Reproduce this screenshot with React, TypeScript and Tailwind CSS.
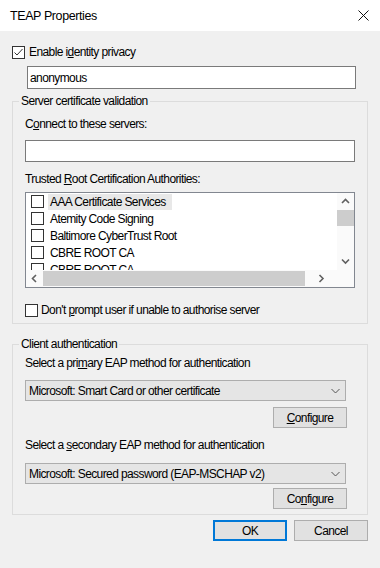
import React from "react";

const Check: React.FC<{ checked?: boolean }> = ({ checked }) => (
  <span className="w-[13px] h-[13px] border border-[#333333] bg-white flex items-center justify-center shrink-0">
    {checked && (
      <svg width="11" height="11" viewBox="0 0 11 11">
        <path d="M1.5 5.5 L4 8 L9.5 2" stroke="#333333" fill="none" strokeWidth="1" />
      </svg>
    )}
  </span>
);

const Chevron: React.FC<{ dir: "up" | "down" | "left" | "right" }> = ({ dir }) => {
  const d = {
    up: "M1 5 L4.5 1.5 L8 5",
    down: "M1 1.5 L4.5 5 L8 1.5",
    left: "M5 1 L1.5 4.5 L5 8",
    right: "M1.5 1 L5 4.5 L1.5 8",
  }[dir];
  const vertical = dir === "up" || dir === "down";
  return (
    <svg width={vertical ? 9 : 7} height={vertical ? 7 : 9} viewBox={vertical ? "0 0 9 7" : "0 0 7 9"}>
      <path d={d} stroke="#606060" strokeWidth="1.6" fill="none" />
    </svg>
  );
};

const Dropdown: React.FC<{ value: string }> = ({ value }) => (
  <div className="h-[21px] w-[321px] border border-[#adadad] bg-[#e5e5e5] flex items-center justify-between pl-[3px] pr-[5px]">
    <span>{value}</span>
    <svg width="9" height="6" viewBox="0 0 9 6">
      <path d="M0.5 1 L4.5 5 L8.5 1" stroke="#555555" strokeWidth="1" fill="none" />
    </svg>
  </div>
);

const Button: React.FC<{ children: React.ReactNode; primary?: boolean; className?: string }> = ({
  children,
  primary,
  className,
}) => (
  <div
    className={
      "h-[21px] w-[74px] bg-[#e1e1e1] flex items-center justify-center " +
      (primary ? "border border-[#0078d7] shadow-[inset_0_0_0_1px_#0078d7] " : "border border-[#adadad] ") +
      (className ?? "")
    }
  >
    {children}
  </div>
);

const certs = [
  "AAA Certificate Services",
  "Atemity Code Signing",
  "Baltimore CyberTrust Root",
  "CBRE ROOT CA",
  "CBRE ROOT CA",
];

export default function App() {
  return (
    <div className="w-[380px] h-[568px] bg-[#f0f0f0] text-[12px] leading-[16px] text-black font-['Liberation_Sans',Arial,sans-serif] tracking-[-0.6px] overflow-hidden">
      {/* title bar */}
      <div className="h-[31px] bg-white flex items-center justify-between pl-[10px] pr-[10px]">
        <span className="text-[12.5px] tracking-[-0.4px]">TEAP Properties</span>
        <svg width="11" height="11" viewBox="0 0 11 11" className="mr-[1px]">
          <path d="M0.5 0.5 L10.5 10.5 M10.5 0.5 L0.5 10.5" stroke="#111111" strokeWidth="1" />
        </svg>
      </div>

      <div className="pl-[12px] pr-[12px]">
        <div className="mt-[13px] flex items-center gap-[4px] h-[16px]">
          <Check checked />
          <span>
            Enable i<u className="underline-offset-1">d</u>entity privacy
          </span>
        </div>
        <div className="mt-[6px] ml-[15px] w-[329px] h-[23px] bg-white border border-[#7a7a7a] flex items-center pl-[2px]">
          anonymous
        </div>

        {/* server certificate validation */}
        <fieldset className="mt-[4px] border border-[#dcdcdc] pl-[12px] pr-[12px] pb-[5px]">
          <legend className="ml-[-6px] px-[2px]">Server certificate validation</legend>
          <div className="mt-[7px]">
            C<u className="underline-offset-1">o</u>nnect to these servers:
          </div>
          <div className="mt-[8px] h-[22px] w-[330px] bg-white border border-[#7a7a7a]" />
          <div className="mt-[9px]">
            Trusted <u className="underline-offset-1">R</u>oot Certification Authorities:
          </div>
          <div className="mt-[5px] w-[330px] h-[96px] bg-white border border-[#828790] grid grid-cols-[1fr_17px] grid-rows-[1fr_17px]">
            <div className="overflow-hidden pl-[5px]">
              {certs.map((c, i) => (
                <div key={i} className="h-[17px] flex items-center gap-[4px]">
                  <Check />
                  <span className={i === 0 ? "bg-[#e8e8e8] pl-[2px] pr-[6px] h-[16px]" : "pl-[2px]"}>{c}</span>
                </div>
              ))}
            </div>
            <div className="bg-[#fafafa] flex flex-col items-center">
              <div className="h-[17px] flex items-center">
                <Chevron dir="up" />
              </div>
              <div className="w-[17px] h-[16px] bg-[#cdcdcd]" />
              <div className="flex-1" />
              <div className="h-[17px] flex items-center">
                <Chevron dir="down" />
              </div>
            </div>
            <div className="bg-[#fafafa] flex items-center">
              <div className="w-[17px] flex justify-center">
                <Chevron dir="left" />
              </div>
              <div className="w-[262px] h-[15px] bg-[#cdcdcd]" />
              <div className="flex-1 flex justify-center">
                <Chevron dir="right" />
              </div>
            </div>
            <div className="bg-[#fafafa]" />
          </div>
          <div className="mt-[14px] flex items-center gap-[3px] h-[16px]">
            <Check />
            <span>
              Don't <u className="underline-offset-1">p</u>rompt user if unable to authorise server
            </span>
          </div>
        </fieldset>

        {/* client authentication */}
        <fieldset className="mt-[12px] border border-[#dcdcdc] pl-[12px] pr-[20px] pb-[5px]">
          <legend className="ml-[-6px] px-[2px]">Client authentication</legend>
          <div className="mt-[3px]">
            Select a pri<u className="underline-offset-1">m</u>ary EAP method for authentication
          </div>
          <div className="mt-[9px]">
            <Dropdown value="Microsoft: Smart Card or other certificate" />
          </div>
          <div className="mt-[6px] flex justify-end">
            <Button className="w-[73px]">
              <span>
                <u className="underline-offset-1">C</u>onfigure
              </span>
            </Button>
          </div>
          <div className="mt-[9px]">
            Select a <u className="underline-offset-1">s</u>econdary EAP method for authentication
          </div>
          <div className="mt-[10px]">
            <Dropdown value="Microsoft: Secured password (EAP-MSCHAP v2)" />
          </div>
          <div className="mt-[4px] flex justify-end">
            <Button className="w-[73px]">
              <span>
                Co<u className="underline-offset-1">n</u>figure
              </span>
            </Button>
          </div>
        </fieldset>

        <div className="mt-[5px] flex justify-end gap-[7px]">
          <Button primary>OK</Button>
          <Button>Cancel</Button>
        </div>
      </div>
    </div>
  );
}
